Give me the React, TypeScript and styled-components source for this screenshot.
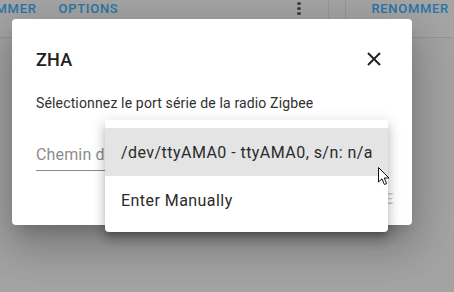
import React from 'react';
import styled, { createGlobalStyle } from 'styled-components';

const Global = createGlobalStyle`
  html, body { margin: 0; padding: 0; }
  body {
    font-family: Roboto, "Liberation Sans", sans-serif;
    background: #a4a4a4;
    overflow: hidden;
  }
`

const Page = styled.div`
  position: relative;
  width: 454px;
  height: 292px;
  overflow: hidden;
  background: #a3a3a3;
`

const Toolbar = styled.div`
  height: 37px;
  display: flex;
  align-items: flex-start;
  border-bottom: 1px solid #959595;
  background: #a5a5a5;
`

const ToolButton = styled.span<{ left?: number }>`
  margin-left: ${({ left }) => left ?? 0}px;
  padding-top: 1px;
  font-size: 13px;
  font-weight: 500;
  letter-spacing: 0.7px;
  color: #2a76a8;
  line-height: 16px;
  white-space: nowrap;
`

const Dots = styled.div`
  margin-left: auto;
  display: flex;
  flex-direction: column;
  gap: 2px;
  padding-top: 2px;
  width: 4px;
  & > i {
    display: block;
    width: 4px;
    height: 3px;
    border-radius: 50%;
    background: #3c3c3c;
  }
`

const Divider = styled.div<{ gap: number }>`
  width: 1px;
  height: 37px;
  margin-left: ${({ gap }) => gap}px;
  background: #979797;
`

const Dialog = styled.div`
  position: absolute;
  left: 12px;
  top: 19px;
  width: 400px;
  height: 206px;
  background: #fff;
  border-radius: 4px;
  box-shadow: 0 11px 15px -7px rgba(0,0,0,.2), 0 24px 38px 3px rgba(0,0,0,.14), 0 9px 46px 8px rgba(0,0,0,.12);
  padding: 0 24px;
  box-sizing: border-box;
`

const Header = styled.div`
  display: flex;
  align-items: center;
  justify-content: space-between;
  height: 50px;
  padding-top: 15px;
`

const Title = styled.h2`
  margin: 0;
  font-size: 18px;
  font-weight: 500;
  color: #212121;
  letter-spacing: 0.2px;
`

const Close = styled.button`
  border: 0;
  background: none;
  padding: 0;
  margin-right: 2px;
  width: 24px;
  height: 24px;
  display: flex;
  align-items: center;
  justify-content: center;
`

const Text = styled.p`
  margin: 11px 0 0;
  font-size: 14px;
  color: #303030;
  letter-spacing: 0.15px;
`

const Field = styled.div`
  margin-top: 27px;
  width: 200px;
  height: 33px;
  border-bottom: 1px solid #8a8a8a;
  font-size: 16px;
  color: #8c8c8c;
  letter-spacing: 0.15px;
  display: flex;
  align-items: flex-end;
  padding-bottom: 6px;
  box-sizing: border-box;
  white-space: nowrap;
  overflow: hidden;
`

const Actions = styled.div`
  display: flex;
  justify-content: flex-end;
  margin-top: 20px;
  margin-right: -6px;
  font-size: 14px;
  font-weight: 500;
  letter-spacing: 1.2px;
  color: #c8c8c8;
`

const Menu = styled.ul`
  position: absolute;
  left: 105px;
  top: 120px;
  width: 283px;
  margin: 0;
  padding: 8px 0;
  list-style: none;
  background: #fff;
  border-radius: 0 0 4px 4px;
  box-shadow: 0 5px 5px -3px rgba(0,0,0,.2), 0 8px 10px 1px rgba(0,0,0,.14), 0 3px 14px 2px rgba(0,0,0,.12);
`

const Item = styled.li<{ active?: boolean }>`
  height: 48px;
  display: flex;
  align-items: center;
  padding: 0 16px;
  font-size: 16px;
  color: #2b2b2b;
  letter-spacing: 0.45px;
  white-space: nowrap;
  background: ${({ active }) => (active ? '#e4e4e4' : 'transparent')};
`

const Cursor = styled.svg`
  position: absolute;
  left: 378px;
  top: 167px;
`

export default function App() {
  return (
    <Page>
      <Global />
      <Toolbar>
        <ToolButton left={-41}>RENOMMER</ToolButton>
        <ToolButton left={22}>OPTIONS</ToolButton>
        <Dots><i /><i /><i /></Dots>
        <Divider gap={27} />
        <Divider gap={16} />
        <ToolButton left={25} style={{ marginRight: 5 }}>RENOMMER</ToolButton>
      </Toolbar>
      <Dialog>
        <Header>
          <Title>ZHA</Title>
          <Close aria-label="Fermer">
            <svg width="14" height="14" viewBox="0 0 14 14">
              <path d="M1 1L13 13M13 1L1 13" stroke="#222" strokeWidth="2" />
            </svg>
          </Close>
        </Header>
        <Text>Sélectionnez le port série de la radio Zigbee</Text>
        <Field>Chemin du périphérique USB</Field>
        <Actions>SUIVANTE</Actions>
      </Dialog>
      <Menu>
        <Item active>/dev/ttyAMA0 - ttyAMA0, s/n: n/a</Item>
        <Item>Enter Manually</Item>
      </Menu>
      <Cursor width="12" height="19" viewBox="0 0 12 19">
        <path d="M0.5 0.5 L0.5 15 L4 11.8 L6.4 17.5 L8.6 16.6 L6.3 11 L11 11 Z" fill="#fff" stroke="#111" strokeWidth="1" strokeLinejoin="round" />
      </Cursor>
    </Page>
  );
}
